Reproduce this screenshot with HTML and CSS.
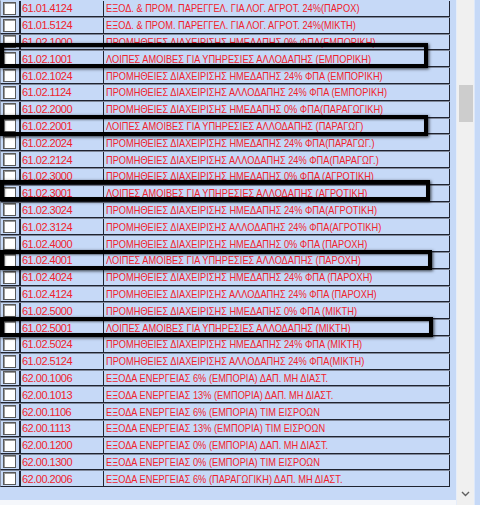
FILE: index.html
```html
<!DOCTYPE html>
<html lang="el">
<head>
<meta charset="utf-8">
<title>Λογαριασμοί</title>
<link rel="stylesheet" href="styles.css">
</head>
<body>
<div class="frame">
  <div class="main">
    <div class="list">
      <div class="row"><div class="chk"><span class="box"></span></div><div class="code">61.01.4124</div><div class="desc"><span>ΕΞΟΔ. &amp; ΠΡΟΜ. ΠΑΡΕΓΓΕΛ. ΓΙΑ ΛΟΓ. ΑΓΡΟΤ. 24%(ΠΑΡΟΧ)</span></div></div>
      <div class="row"><div class="chk"><span class="box"></span></div><div class="code">61.01.5124</div><div class="desc"><span>ΕΞΟΔ. &amp; ΠΡΟΜ. ΠΑΡΕΓΓΕΛ. ΓΙΑ ΛΟΓ. ΑΓΡΟΤ. 24%(ΜΙΚΤΗ)</span></div></div>
      <div class="row"><div class="chk"><span class="box"></span></div><div class="code">61.02.1000</div><div class="desc"><span>ΠΡΟΜΗΘΕΙΕΣ ΔΙΑΧΕΙΡΙΣΗΣ ΗΜΕΔΑΠΗΣ 0% ΦΠΑ(ΕΜΠΟΡΙΚΗ)</span></div></div>
      <div class="row"><div class="chk"><span class="box"></span></div><div class="code">61.02.1001</div><div class="desc"><span>ΛΟΙΠΕΣ ΑΜΟΙΒΕΣ ΓΙΑ ΥΠΗΡΕΣΙΕΣ ΑΛΛΟΔΑΠΗΣ (ΕΜΠΟΡΙΚΗ)</span></div></div>
      <div class="row"><div class="chk"><span class="box"></span></div><div class="code">61.02.1024</div><div class="desc"><span>ΠΡΟΜΗΘΕΙΕΣ ΔΙΑΧΕΙΡΙΣΗΣ ΗΜΕΔΑΠΗΣ 24% ΦΠΑ (ΕΜΠΟΡΙΚΗ)</span></div></div>
      <div class="row"><div class="chk"><span class="box"></span></div><div class="code">61.02.1124</div><div class="desc"><span>ΠΡΟΜΗΘΕΙΕΣ ΔΙΑΧΕΙΡΙΣΗΣ ΑΛΛΟΔΑΠΗΣ 24% ΦΠΑ (ΕΜΠΟΡΙΚΗ)</span></div></div>
      <div class="row"><div class="chk"><span class="box"></span></div><div class="code">61.02.2000</div><div class="desc"><span>ΠΡΟΜΗΘΕΙΕΣ ΔΙΑΧΕΙΡΙΣΗΣ ΗΜΕΔΑΠΗΣ 0% ΦΠΑ(ΠΑΡΑΓΩΓΙΚΗ)</span></div></div>
      <div class="row"><div class="chk"><span class="box"></span></div><div class="code">61.02.2001</div><div class="desc"><span>ΛΟΙΠΕΣ ΑΜΟΙΒΕΣ ΓΙΑ ΥΠΗΡΕΣΙΕΣ ΑΛΛΟΔΑΠΗΣ (ΠΑΡΑΓΩΓ)</span></div></div>
      <div class="row"><div class="chk"><span class="box"></span></div><div class="code">61.02.2024</div><div class="desc"><span>ΠΡΟΜΗΘΕΙΕΣ ΔΙΑΧΕΙΡΙΣΗΣ ΗΜΕΔΑΠΗΣ 24% ΦΠΑ(ΠΑΡΑΓΩΓ.)</span></div></div>
      <div class="row"><div class="chk"><span class="box"></span></div><div class="code">61.02.2124</div><div class="desc"><span>ΠΡΟΜΗΘΕΙΕΣ ΔΙΑΧΕΙΡΙΣΗΣ ΑΛΛΟΔΑΠΗΣ 24% ΦΠΑ(ΠΑΡΑΓΩΓ.)</span></div></div>
      <div class="row"><div class="chk"><span class="box"></span></div><div class="code">61.02.3000</div><div class="desc"><span>ΠΡΟΜΗΘΕΙΕΣ ΔΙΑΧΕΙΡΙΣΗΣ ΗΜΕΔΑΠΗΣ 0% ΦΠΑ (ΑΓΡΟΤΙΚΗ)</span></div></div>
      <div class="row"><div class="chk"><span class="box"></span></div><div class="code">61.02.3001</div><div class="desc"><span>ΛΟΙΠΕΣ ΑΜΟΙΒΕΣ ΓΙΑ ΥΠΗΡΕΣΙΕΣ ΑΛΛΟΔΑΠΗΣ (ΑΓΡΟΤΙΚΗ)</span></div></div>
      <div class="row"><div class="chk"><span class="box"></span></div><div class="code">61.02.3024</div><div class="desc"><span>ΠΡΟΜΗΘΕΙΕΣ ΔΙΑΧΕΙΡΙΣΗΣ ΗΜΕΔΑΠΗΣ 24% ΦΠΑ(ΑΓΡΟΤΙΚΗ)</span></div></div>
      <div class="row"><div class="chk"><span class="box"></span></div><div class="code">61.02.3124</div><div class="desc"><span>ΠΡΟΜΗΘΕΙΕΣ ΔΙΑΧΕΙΡΙΣΗΣ ΑΛΛΟΔΑΠΗΣ 24% ΦΠΑ(ΑΓΡΟΤΙΚΗ)</span></div></div>
      <div class="row"><div class="chk"><span class="box"></span></div><div class="code">61.02.4000</div><div class="desc"><span>ΠΡΟΜΗΘΕΙΕΣ ΔΙΑΧΕΙΡΙΣΗΣ ΗΜΕΔΑΠΗΣ 0% ΦΠΑ (ΠΑΡΟΧΗ)</span></div></div>
      <div class="row"><div class="chk"><span class="box"></span></div><div class="code">61.02.4001</div><div class="desc"><span>ΛΟΙΠΕΣ ΑΜΟΙΒΕΣ ΓΙΑ ΥΠΗΡΕΣΙΕΣ ΑΛΛΟΔΑΠΗΣ (ΠΑΡΟΧΗ)</span></div></div>
      <div class="row"><div class="chk"><span class="box"></span></div><div class="code">61.02.4024</div><div class="desc"><span>ΠΡΟΜΗΘΕΙΕΣ ΔΙΑΧΕΙΡΙΣΗΣ ΗΜΕΔΑΠΗΣ 24% ΦΠΑ (ΠΑΡΟΧΗ)</span></div></div>
      <div class="row"><div class="chk"><span class="box"></span></div><div class="code">61.02.4124</div><div class="desc"><span>ΠΡΟΜΗΘΕΙΕΣ ΔΙΑΧΕΙΡΙΣΗΣ ΑΛΛΟΔΑΠΗΣ 24% ΦΠΑ (ΠΑΡΟΧΗ)</span></div></div>
      <div class="row"><div class="chk"><span class="box"></span></div><div class="code">61.02.5000</div><div class="desc"><span>ΠΡΟΜΗΘΕΙΕΣ ΔΙΑΧΕΙΡΙΣΗΣ ΗΜΕΔΑΠΗΣ 0% ΦΠΑ (ΜΙΚΤΗ)</span></div></div>
      <div class="row"><div class="chk"><span class="box"></span></div><div class="code">61.02.5001</div><div class="desc"><span>ΛΟΙΠΕΣ ΑΜΟΙΒΕΣ ΓΙΑ ΥΠΗΡΕΣΙΕΣ ΑΛΛΟΔΑΠΗΣ (ΜΙΚΤΗ)</span></div></div>
      <div class="row"><div class="chk"><span class="box"></span></div><div class="code">61.02.5024</div><div class="desc"><span>ΠΡΟΜΗΘΕΙΕΣ ΔΙΑΧΕΙΡΙΣΗΣ ΗΜΕΔΑΠΗΣ 24% ΦΠΑ (ΜΙΚΤΗ)</span></div></div>
      <div class="row"><div class="chk"><span class="box"></span></div><div class="code">61.02.5124</div><div class="desc"><span>ΠΡΟΜΗΘΕΙΕΣ ΔΙΑΧΕΙΡΙΣΗΣ ΑΛΛΟΔΑΠΗΣ 24% ΦΠΑ(ΜΙΚΤΗ)</span></div></div>
      <div class="row"><div class="chk"><span class="box"></span></div><div class="code">62.00.1006</div><div class="desc"><span>ΕΞΟΔΑ ΕΝΕΡΓΕΙΑΣ 6% (ΕΜΠΟΡΙΑ) ΔΑΠ. ΜΗ ΔΙΑΣΤ.</span></div></div>
      <div class="row"><div class="chk"><span class="box"></span></div><div class="code">62.00.1013</div><div class="desc"><span>ΕΞΟΔΑ ΕΝΕΡΓΕΙΑΣ 13% (ΕΜΠΟΡΙΑ) ΔΑΠ. ΜΗ ΔΙΑΣΤ.</span></div></div>
      <div class="row"><div class="chk"><span class="box"></span></div><div class="code">62.00.1106</div><div class="desc"><span>ΕΞΟΔΑ ΕΝΕΡΓΕΙΑΣ 6% (ΕΜΠΟΡΙΑ) ΤΙΜ ΕΙΣΡΟΩΝ</span></div></div>
      <div class="row"><div class="chk"><span class="box"></span></div><div class="code">62.00.1113</div><div class="desc"><span>ΕΞΟΔΑ ΕΝΕΡΓΕΙΑΣ 13% (ΕΜΠΟΡΙΑ) ΤΙΜ ΕΙΣΡΟΩΝ</span></div></div>
      <div class="row"><div class="chk"><span class="box"></span></div><div class="code">62.00.1200</div><div class="desc"><span>ΕΞΟΔΑ ΕΝΕΡΓΕΙΑΣ 0% (ΕΜΠΟΡΙΑ) ΔΑΠ. ΜΗ ΔΙΑΣΤ.</span></div></div>
      <div class="row"><div class="chk"><span class="box"></span></div><div class="code">62.00.1300</div><div class="desc"><span>ΕΞΟΔΑ ΕΝΕΡΓΕΙΑΣ 0% (ΕΜΠΟΡΙΑ) ΤΙΜ ΕΙΣΡΟΩΝ</span></div></div>
      <div class="row"><div class="chk"><span class="box"></span></div><div class="code">62.00.2006</div><div class="desc"><span>ΕΞΟΔΑ ΕΝΕΡΓΕΙΑΣ 6% (ΠΑΡΑΓΩΓΙΚΗ) ΔΑΠ. ΜΗ ΔΙΑΣΤ.</span></div></div>
    </div>
  </div>
  <div class="scrollbar">
    <div class="thumb"></div>
    <svg class="arrow" width="9" height="6" viewBox="0 0 9 6"><polyline points="1,1 4.5,4.5 8,1" fill="none" stroke="#606060" stroke-width="1.4"/></svg>
  </div>
  <div class="edge"></div>
</div>
<div class="mark m1"></div>
<div class="mark m2"></div>
<div class="mark m3"></div>
<div class="mark m4"></div>
<div class="mark m5"></div>
</body>
</html>
```

FILE: styles.css
```css
html, body {
  margin: 0;
  padding: 0;
}
body {
  width: 480px;
  height: 505px;
  overflow: hidden;
  background: #c6d9f7;
  font-family: "Liberation Sans", Arial, sans-serif;
  position: relative;
}
.frame {
  display: flex;
  height: 505px;
}
.main {
  width: 456px;
  display: flex;
  flex-direction: column;
}
.list {
  display: flex;
  flex-direction: column;
  width: 450px;
  flex: 1;
}
.row {
  display: flex;
  height: 14.8px;
  border-top: 1px solid #7f889a;
  border-bottom: 1px solid #1f2330;
  border-left: 1px solid #8a92a4;
  box-sizing: content-box;
}
.row:first-child {
  border-top-color: #c6d9f7;
}
.chk {
  width: 20px;
  border-right: 2px solid #1f2330;
  display: flex;
  align-items: center;
  padding-left: 2px;
  box-sizing: border-box;
}
.box {
  width: 11px;
  height: 11px;
  background: #ffffff;
  border: 1px solid #5a5a5a;
  box-shadow: inset 1px 1px 0 #9a9a9a;
}
.code, .desc {
  display: flex;
  align-items: center;
  color: #f0222c;
  font-size: 11px;
  white-space: nowrap;
  overflow: hidden;
}
.code {
  width: 83px;
  padding-left: 1px;
  box-sizing: border-box;
  border-right: 1px solid #1f2330;
  letter-spacing: -0.5px;
}
.desc {
  flex: 1;
  padding-left: 2px;
  border-right: 1px solid #1f2330;
}
.desc span {
  display: inline-block;
  transform: scaleX(0.84);
  transform-origin: left center;
}
.main::after {
  content: "";
  height: 5px;
  background: #f5f7fb;
}
.scrollbar {
  width: 18px;
  background: #f0f0f0;
  border-left: 1px solid #e6edf9;
  box-sizing: border-box;
  position: relative;
}
.thumb {
  margin: 85px 0 0 2px;
  width: 14px;
  height: 37px;
  background: #cdcdcd;
}
.arrow {
  position: absolute;
  left: 4px;
  bottom: 8px;
}
.edge {
  flex: 1;
  background: #c6d9f7;
  border-left: 1px solid #dde8fa;
}
.mark {
  position: absolute;
  left: 0;
  border: 4px solid #000;
  box-shadow: 1px 1px 3px rgba(0, 0, 0, 0.75), inset 1px 1px 2px rgba(0, 0, 0, 0.5);
  box-sizing: border-box;
}
.m1 { top: 43px; width: 428px; height: 25px; }
.m2 { top: 115px; width: 428px; height: 21px; }
.m3 { top: 180px; width: 430px; height: 21px; }
.m4 { top: 250px; width: 432px; height: 20px; }
.m5 { top: 317px; width: 433px; height: 20px; }
```
